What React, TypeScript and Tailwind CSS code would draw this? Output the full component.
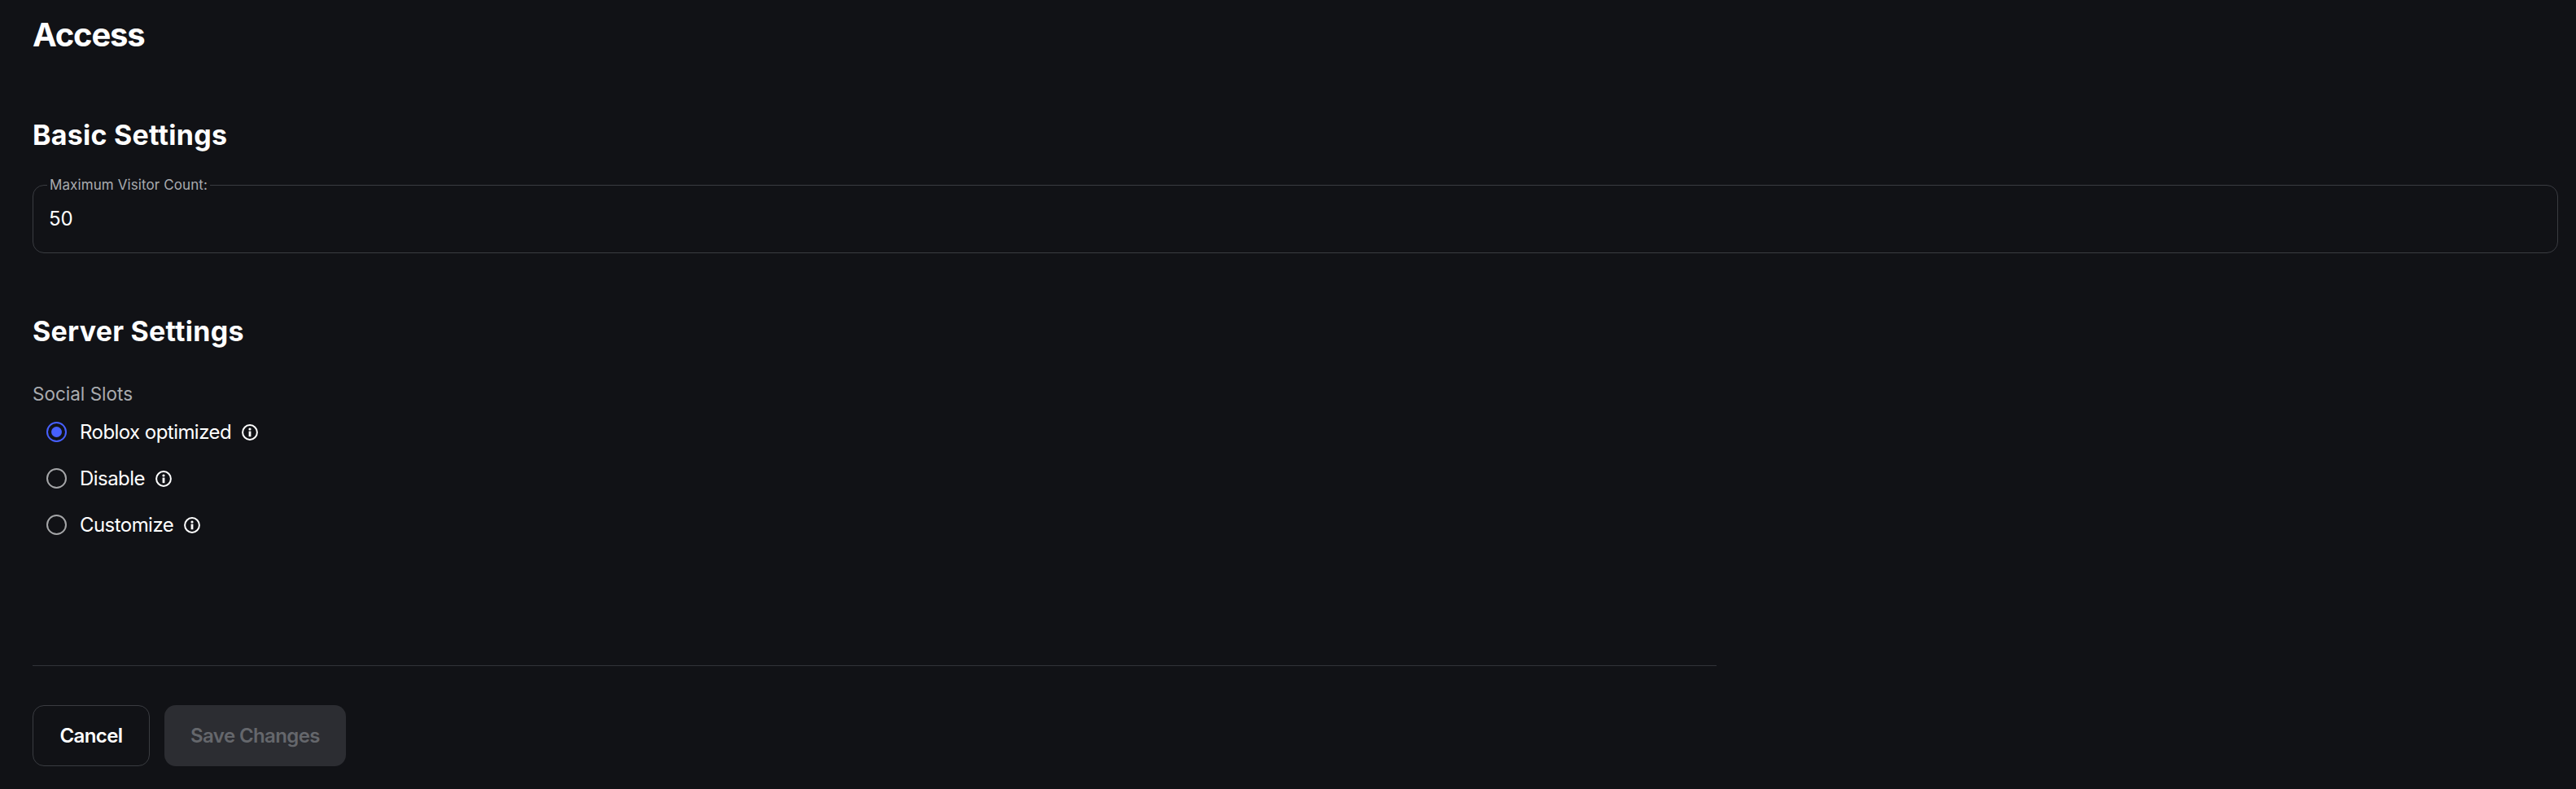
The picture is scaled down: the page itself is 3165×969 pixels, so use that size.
const font = { fontFamily: 'Inter, "Noto Sans", sans-serif' }

function InfoIcon() {
  return (
    <svg width="20" height="20" viewBox="0 0 20 20" fill="none" className="ml-[13px] shrink-0">
      <circle cx="10" cy="10" r="8.9" stroke="#fff" strokeWidth="2" />
      <circle cx="10" cy="6" r="1.6" fill="#fff" />
      <rect x="8.6" y="8.6" width="2.8" height="6.6" fill="#fff" />
    </svg>
  )
}

function RadioRow({ label, checked }: { label: string; checked?: boolean }) {
  return (
    <div className="flex items-center h-[57px] pl-[17px]">
      <span
        className={`flex items-center justify-center w-[25px] h-[25px] rounded-full border-[2.5px] ${
          checked ? 'border-[#4760ff]' : 'border-[#a5a6a8]'
        }`}
      >
        {checked && <span className="w-[13px] h-[13px] rounded-full bg-[#4760ff]" />}
      </span>
      <span className="ml-[16px] text-[24px] leading-[30px] text-white tracking-[-0.55px]">{label}</span>
      <InfoIcon />
    </div>
  )
}

export default function App() {
  return (
    <div className="w-[3165px] h-[969px] overflow-hidden bg-[#111216] pl-10 pr-[22px]" style={font}>
      <h1 className="pt-[18px] text-[40px] leading-[50px] font-bold text-white tracking-[-1.2px]">Access</h1>

      <h2 className="mt-[78px] text-[34px] leading-[40px] font-bold text-white tracking-[0.25px]">Basic Settings</h2>

      <fieldset className="mt-[31px] h-[94px] border border-[#3a3c41] rounded-[14px] px-[17px]">
        <legend className="px-[3px] text-[17px] leading-[20px] tracking-[0.1px] text-[#a9abaf]">Maximum Visitor Count:</legend>
        <div className="mt-[17px] pl-[2px] text-[24px] leading-[30px] text-white">50</div>
      </fieldset>

      <h2 className="mt-[76px] text-[34px] leading-[40px] font-bold text-white tracking-[0.25px]">Server Settings</h2>

      <p className="mt-[43px] text-[22.5px] leading-[28px] text-[#a9abaf]">Social Slots</p>
      <div className="mt-[4px]">
        <RadioRow label="Roblox optimized" checked />
        <RadioRow label="Disable" />
        <RadioRow label="Customize" />
      </div>

      <div className="mt-[144px] w-[2069px] h-px bg-[#313338]" />

      <div className="mt-[48px] flex gap-[18px]">
        <button className="w-[144px] h-[75px] rounded-[14px] border border-[#3a3c41] text-[24px] font-semibold text-white tracking-[-0.6px]">
          Cancel
        </button>
        <button className="w-[223px] h-[75px] rounded-[14px] bg-[#2c2d32] text-[24px] font-semibold text-[#65676c] tracking-[-0.6px]">
          Save Changes
        </button>
      </div>
    </div>
  )
}
